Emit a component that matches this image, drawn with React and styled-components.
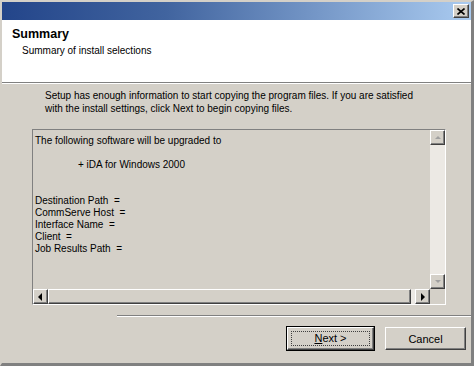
import React from 'react';
import styled, { createGlobalStyle } from 'styled-components';

const GlobalStyle = createGlobalStyle`
  html, body {
    margin: 0;
    padding: 0;
    background: #d4d0c8;
  }
  body {
    font-family: "Liberation Sans", Arial, sans-serif;
    font-size: 10px;
    color: #000;
  }
`;

const Window = styled.div`
  width: 474px;
  height: 366px;
  box-sizing: border-box;
  background: #d4d0c8;
  border-top: 2px solid #d4d0c8;
  border-left: 2px solid #d4d0c8;
  border-right: 3px solid #808080;
  border-bottom: 3px solid #808080;
  display: flex;
  flex-direction: column;
  overflow: hidden;
`;

const TitleBar = styled.div`
  height: 18px;
  flex: none;
  background: linear-gradient(to right, #23458a 0%, #41649f 35%, #aacbf0 100%);
  display: flex;
  align-items: center;
  justify-content: flex-end;
  padding-right: 2px;
`;

const CloseButton = styled.div`
  width: 16px;
  height: 14px;
  box-sizing: border-box;
  background: #d4d0c8;
  border-top: 1px solid #fff;
  border-left: 1px solid #fff;
  border-right: 1px solid #404040;
  border-bottom: 1px solid #404040;
  box-shadow: inset -1px -1px 0 #808080;
  display: flex;
  align-items: center;
  justify-content: center;
`;

const Header = styled.div`
  height: 63px;
  flex: none;
  background: #fff;
  border-bottom: 1px solid #808080;
  box-shadow: 0 1px 0 #fff;
  padding: 7px 0 0 10px;
  box-sizing: border-box;
`;

const HeaderTitle = styled.div`
  font-weight: bold;
  font-size: 12.5px;
  line-height: 15px;
`;

const HeaderSub = styled.div`
  margin-top: 2px;
  padding-left: 10px;
  line-height: 13px;
`;

const Body = styled.div`
  flex: 1;
  display: flex;
  flex-direction: column;
  padding: 6px 0 0 0;
`;

const Intro = styled.p`
  margin: 0 0 0 43px;
  width: 380px;
  line-height: 13px;
`;

const TextArea = styled.div`
  margin: 14px 0 0 30px;
  width: 414px;
  height: 176px;
  box-sizing: border-box;
  border-top: 1px solid #808080;
  border-left: 1px solid #808080;
  border-right: 1px solid #fff;
  border-bottom: 1px solid #fff;
  display: grid;
  grid-template-columns: 1fr 15px;
  grid-template-rows: 1fr 15px;
`;

const Content = styled.div`
  padding: 5px 0 0 2px;
  line-height: 12px;
  white-space: pre;
  overflow: hidden;
`;

const Line = styled.div`
  padding-left: ${p => p.indent || 0}px;
`;

const VScroll = styled.div`
  display: flex;
  flex-direction: column;
  background-color: #ece9e4;
`;

const HScroll = styled.div`
  display: flex;
  background-color: #ece9e4;
`;

const Corner = styled.div`
  background: #d4d0c8;
`;

const ArrowButton = styled.div`
  width: 15px;
  height: 15px;
  flex: none;
  box-sizing: border-box;
  background: #d4d0c8;
  border-top: 1px solid #fff;
  border-left: 1px solid #fff;
  border-right: 1px solid #404040;
  border-bottom: 1px solid #404040;
  box-shadow: inset -1px -1px 0 #808080;
  display: flex;
  align-items: center;
  justify-content: center;
`;

const Track = styled.div`
  flex: 1;
  background: #ece9e4;
`;

const Thumb = styled.div`
  flex: 1;
  margin-right: 4px;
  box-sizing: border-box;
  background: #d4d0c8;
  border-top: 1px solid #fff;
  border-left: 1px solid #fff;
  border-right: 1px solid #404040;
  border-bottom: 1px solid #404040;
  box-shadow: inset -1px -1px 0 #808080;
`;

const Separator = styled.div`
  margin: 10px 0 0 115px;
  height: 0;
  border-top: 1px solid #808080;
  border-bottom: 1px solid #fff;
`;

const ButtonRow = styled.div`
  display: flex;
  justify-content: flex-end;
  gap: 11px;
  margin: 10px 5px 0 0;
`;

const Button = styled.button`
  width: ${p => (p.primary ? 87 : 81)}px;
  height: 23px;
  box-sizing: border-box;
  font-family: "Liberation Sans", Arial, sans-serif;
  font-size: 11px;
  color: #000;
  background: #d4d0c8;
  padding: 0;
  border-top: 1px solid #fff;
  border-left: 1px solid #fff;
  border-right: 1px solid #404040;
  border-bottom: 1px solid #404040;
  box-shadow: inset -1px -1px 0 #808080;
  outline: ${p => (p.primary ? '1px solid #000' : 'none')};
  outline-offset: 0;
  cursor: default;
`;

const Focus = styled.span`
  display: block;
  margin: 3px;
  height: 13px;
  line-height: 13px;
  border: 1px dotted #404040;
`;

const Tri = ({ dir, color = '#000' }) => {
  const pts = {
    up: '1,5 4,2 7,5',
    down: '1,2 4,5 7,2',
    left: '5,0 1,4 5,8',
    right: '2,0 6,4 2,8',
  }[dir];
  return (
    <svg width="8" height="8" viewBox="0 0 8 8">
      <polygon points={pts} fill={color} />
    </svg>
  );
};

export default function App() {
  return (
    <>
      <GlobalStyle />
      <Window>
        <TitleBar>
          <CloseButton>
            <svg width="8" height="7" viewBox="0 0 8 7">
              <path d="M0.5 0.5 L7.5 6.5 M7.5 0.5 L0.5 6.5" stroke="#000" strokeWidth="1.6" />
            </svg>
          </CloseButton>
        </TitleBar>
        <Header>
          <HeaderTitle>Summary</HeaderTitle>
          <HeaderSub>Summary of install selections</HeaderSub>
        </Header>
        <Body>
          <Intro>
            Setup has enough information to start copying the program files. If you are satisfied
            with the install settings, click Next to begin copying files.
          </Intro>
          <TextArea>
            <Content>
              <Line>The following software will be upgraded to</Line>
              <Line>{' '}</Line>
              <Line indent={43}>+ iDA for Windows 2000</Line>
              <Line>{' '}</Line>
              <Line>{' '}</Line>
              <Line>Destination Path  =</Line>
              <Line>CommServe Host  =</Line>
              <Line>Interface Name  =</Line>
              <Line>Client  =</Line>
              <Line>Job Results Path  =</Line>
            </Content>
            <VScroll>
              <ArrowButton><Tri dir="up" color="#a0a0a0" /></ArrowButton>
              <Track />
              <ArrowButton><Tri dir="down" color="#a0a0a0" /></ArrowButton>
            </VScroll>
            <HScroll>
              <ArrowButton><Tri dir="left" /></ArrowButton>
              <Thumb />
              <ArrowButton><Tri dir="right" /></ArrowButton>
            </HScroll>
            <Corner />
          </TextArea>
          <Separator />
          <ButtonRow>
            <Button primary>
              <Focus><u>N</u>ext &gt;</Focus>
            </Button>
            <Button>Cancel</Button>
          </ButtonRow>
        </Body>
      </Window>
    </>
  );
}
